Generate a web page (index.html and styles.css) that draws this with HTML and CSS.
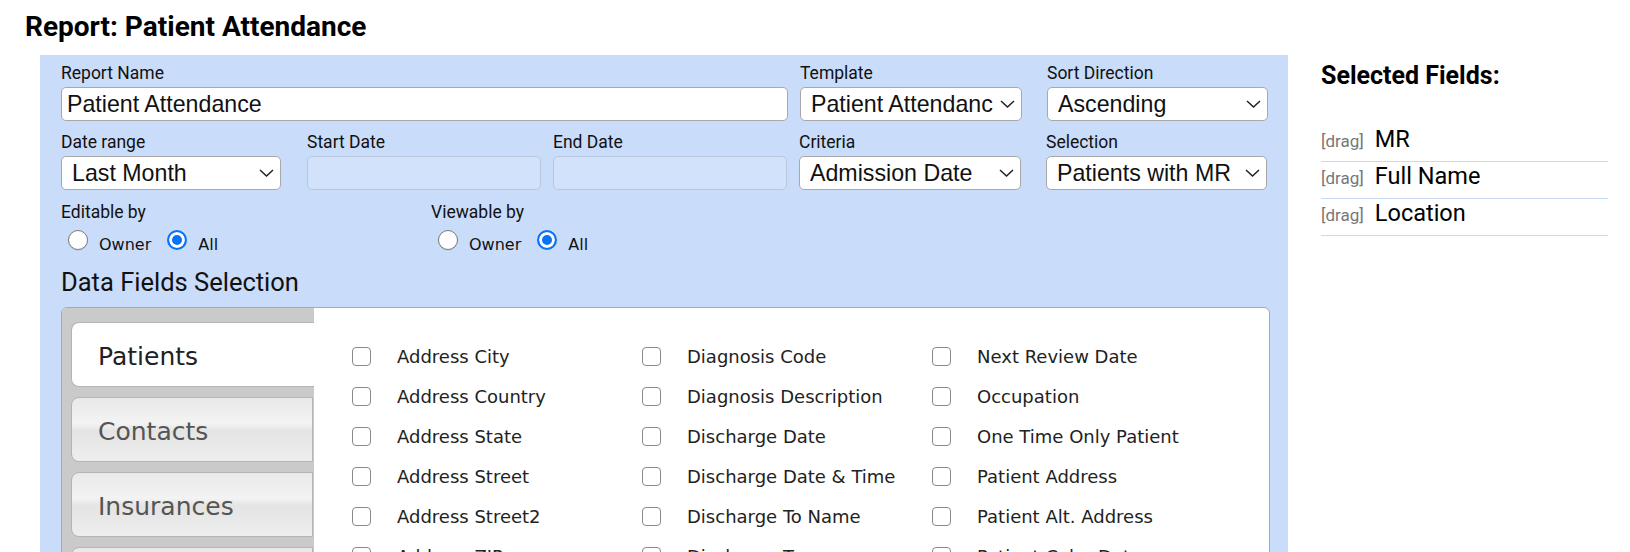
FILE: index.html
```html
<!DOCTYPE html>
<html lang="en">
<head>
<meta charset="utf-8">
<title>Report: Patient Attendance</title>
<link rel="stylesheet" href="styles.css">
</head>
<body>
<h1 class="page-title">Report: Patient Attendance</h1>
<div class="layout">
  <section class="panel">
    <div class="form-row row-1">
      <div class="field f-name">
        <label class="lbl">Report Name</label>
        <input class="txt" type="text" value="Patient Attendance">
      </div>
      <div class="field f-template">
        <label class="lbl">Template</label>
        <div class="sel">
          <select><option>Patient Attendance</option></select>
          <svg class="chev" viewBox="0 0 15 8"><path d="M1 1 L7.5 7 L14 1" fill="none" stroke="#222" stroke-width="1.5"/></svg>
        </div>
      </div>
      <div class="field f-sort">
        <label class="lbl">Sort Direction</label>
        <div class="sel">
          <select><option>Ascending</option></select>
          <svg class="chev" viewBox="0 0 15 8"><path d="M1 1 L7.5 7 L14 1" fill="none" stroke="#222" stroke-width="1.5"/></svg>
        </div>
      </div>
    </div>

    <div class="form-row row-2">
      <div class="field f-range">
        <label class="lbl">Date range</label>
        <div class="sel">
          <select><option>Last Month</option></select>
          <svg class="chev" viewBox="0 0 15 8"><path d="M1 1 L7.5 7 L14 1" fill="none" stroke="#222" stroke-width="1.5"/></svg>
        </div>
      </div>
      <div class="field f-start">
        <label class="lbl">Start Date</label>
        <input class="txt txt-disabled" type="text" disabled>
      </div>
      <div class="field f-end">
        <label class="lbl">End Date</label>
        <input class="txt txt-disabled" type="text" disabled>
      </div>
      <div class="field f-criteria">
        <label class="lbl">Criteria</label>
        <div class="sel">
          <select><option>Admission Date</option></select>
          <svg class="chev" viewBox="0 0 15 8"><path d="M1 1 L7.5 7 L14 1" fill="none" stroke="#222" stroke-width="1.5"/></svg>
        </div>
      </div>
      <div class="field f-selection">
        <label class="lbl">Selection</label>
        <div class="sel">
          <select><option>Patients with MR</option></select>
          <svg class="chev" viewBox="0 0 15 8"><path d="M1 1 L7.5 7 L14 1" fill="none" stroke="#222" stroke-width="1.5"/></svg>
        </div>
      </div>
    </div>

    <div class="form-row row-3">
      <div class="perm perm-edit">
        <label class="lbl lbl-perm">Editable by</label>
        <div class="radios">
          <input class="radio" type="radio" name="edit">
          <span class="radio-text">Owner</span>
          <input class="radio" type="radio" name="edit" checked>
          <span class="radio-text">All</span>
        </div>
      </div>
      <div class="perm">
        <label class="lbl lbl-perm">Viewable by</label>
        <div class="radios">
          <input class="radio" type="radio" name="view">
          <span class="radio-text">Owner</span>
          <input class="radio" type="radio" name="view" checked>
          <span class="radio-text">All</span>
        </div>
      </div>
    </div>

    <h2 class="section-title">Data Fields Selection</h2>

    <div class="tabs-box">
      <div class="tab-col">
        <div class="tab tab-active">Patients</div>
        <div class="tab">Contacts</div>
        <div class="tab">Insurances</div>
        <div class="tab">Services</div>
      </div>
      <div class="fields">
        <label class="chk-item"><input class="chk" type="checkbox"><span class="chk-label">Address City</span></label>
        <label class="chk-item"><input class="chk" type="checkbox"><span class="chk-label">Diagnosis Code</span></label>
        <label class="chk-item"><input class="chk" type="checkbox"><span class="chk-label">Next Review Date</span></label>

        <label class="chk-item"><input class="chk" type="checkbox"><span class="chk-label">Address Country</span></label>
        <label class="chk-item"><input class="chk" type="checkbox"><span class="chk-label">Diagnosis Description</span></label>
        <label class="chk-item"><input class="chk" type="checkbox"><span class="chk-label">Occupation</span></label>

        <label class="chk-item"><input class="chk" type="checkbox"><span class="chk-label">Address State</span></label>
        <label class="chk-item"><input class="chk" type="checkbox"><span class="chk-label">Discharge Date</span></label>
        <label class="chk-item"><input class="chk" type="checkbox"><span class="chk-label">One Time Only Patient</span></label>

        <label class="chk-item"><input class="chk" type="checkbox"><span class="chk-label">Address Street</span></label>
        <label class="chk-item"><input class="chk" type="checkbox"><span class="chk-label">Discharge Date &amp; Time</span></label>
        <label class="chk-item"><input class="chk" type="checkbox"><span class="chk-label">Patient Address</span></label>

        <label class="chk-item"><input class="chk" type="checkbox"><span class="chk-label">Address Street2</span></label>
        <label class="chk-item"><input class="chk" type="checkbox"><span class="chk-label">Discharge To Name</span></label>
        <label class="chk-item"><input class="chk" type="checkbox"><span class="chk-label">Patient Alt. Address</span></label>

        <label class="chk-item"><input class="chk" type="checkbox"><span class="chk-label">Address ZIP</span></label>
        <label class="chk-item"><input class="chk" type="checkbox"><span class="chk-label">Discharge Type</span></label>
        <label class="chk-item"><input class="chk" type="checkbox"><span class="chk-label">Patient Color Date</span></label>
      </div>
    </div>
  </section>

  <aside class="selected">
    <h3 class="sf-title">Selected Fields:</h3>
    <ul class="sf-list">
      <li class="sf-item"><span class="drag">[drag]</span>MR</li>
      <li class="sf-item"><span class="drag">[drag]</span>Full Name</li>
      <li class="sf-item"><span class="drag">[drag]</span>Location</li>
    </ul>
  </aside>
</div>
</body>
</html>
```

FILE: styles.css
```css
html {
  overflow: hidden;
}

body {
  margin: 0;
  background: #ffffff;
  color: #111111;
  font-family: Roboto, "Liberation Sans", Arial, sans-serif;
}

.page-title {
  margin: 0 0 12px 0;
  padding: 11px 0 0 25px;
  font: 700 28px/32px Roboto, "Liberation Sans", sans-serif;
  color: #000;
}

.layout {
  display: flex;
  align-items: flex-start;
  padding-left: 40px;
}

/* ---------- left panel ---------- */
.panel {
  box-sizing: border-box;
  width: 1248px;
  height: 497px;
  overflow: hidden;
  background: #c9dcf9;
  padding: 8px 6px 0 21px;
}

.form-row {
  display: flex;
}

.row-2 {
  margin-top: 11px;
}

.row-3 {
  margin-top: 12px;
}

.field {
  display: flex;
  flex-direction: column;
}

.lbl {
  display: block;
  font: 17.5px/20px Roboto, "Liberation Sans", sans-serif;
  color: #111;
  margin-bottom: 4px;
}

.f-name { width: 727px; }
.f-template { width: 222px; margin-left: 12px; }
.f-sort { width: 221px; margin-left: 25px; }

.f-range { width: 220px; }
.f-start { width: 234px; margin-left: 26px; }
.f-end { width: 234px; margin-left: 12px; }
.f-criteria { width: 222px; margin-left: 12px; }
.f-selection { width: 221px; margin-left: 25px; }

.txt,
.sel select {
  box-sizing: border-box;
  width: 100%;
  height: 34px;
  margin: 0;
  border: 1px solid #a8a8a8;
  border-radius: 5px;
  background: #ffffff;
  color: #111;
  font: 23.2px "Liberation Sans", Arial, sans-serif;
  outline: none;
}

.txt {
  padding: 0 5px;
}

.txt-disabled {
  background: #d2e2fa;
  border-color: #b7c7dd;
}

.sel {
  position: relative;
}

.sel select {
  -webkit-appearance: none;
  appearance: none;
  padding: 0 28px 0 10px;
}

.chev {
  position: absolute;
  right: 7px;
  top: 13px;
  width: 15px;
  height: 8px;
  pointer-events: none;
}

/* permissions */
.perm {
  width: 370px;
}

.lbl-perm {
  margin-bottom: 8px;
}

.radios {
  display: flex;
  align-items: flex-start;
  height: 25px;
  padding-left: 7px;
}

.radio {
  -webkit-appearance: none;
  appearance: none;
  box-sizing: border-box;
  width: 20px;
  height: 20px;
  margin: 0;
  border-radius: 50%;
  border: 1.5px solid #7d7d7d;
  background: #ffffff;
  box-shadow: 0 0.5px 1px rgba(0, 0, 0, 0.15);
}

.radio:checked {
  border: 2px solid #0a72f5;
  background: #0a72f5;
  box-shadow: inset 0 0 0 3px #ffffff;
}

.radio-text {
  font: 16px/20px "DejaVu Sans", Verdana, sans-serif;
  color: #111;
  padding-top: 4.5px;
  margin-left: 11px;
  margin-right: 16px;
}

.section-title {
  margin: 13px 0 0 0;
  font: 400 25.5px/28px Roboto, "Liberation Sans", sans-serif;
  color: #111;
}

/* ---------- tabs box ---------- */
.tabs-box {
  display: flex;
  width: 1209px;
  height: 400px;
  margin-top: 11px;
  border: 1px solid #a9a9a9;
  border-radius: 6px;
  background: #ffffff;
  overflow: hidden;
  box-sizing: border-box;
}

.tab-col {
  box-sizing: border-box;
  width: 252px;
  flex: none;
  background: #cacaca;
  padding: 14px 0 0 9px;
  display: flex;
  flex-direction: column;
  gap: 10px;
}

.tab {
  box-sizing: border-box;
  height: 65px;
  flex: none;
  display: flex;
  align-items: center;
  padding: 4px 0 0 26px;
  margin-right: 1px;
  border: 1px solid #b4b4b4;
  border-radius: 8px 0 0 8px;
  background: linear-gradient(#e9e9e9 0%, #f3f3f3 40%, #e4e4e4 52%, #eeeeee 100%);
  color: #555555;
  font: 25px "DejaVu Sans", Verdana, sans-serif;
}

.tab-active {
  margin-right: 0;
  border-right: none;
  background: #ffffff;
  color: #222222;
}

.fields {
  flex: 1;
  display: grid;
  grid-template-columns: repeat(3, 290px);
  grid-auto-rows: 40px;
  align-content: start;
  padding: 39px 0 0 38px;
}

.chk-item {
  display: flex;
  align-items: flex-start;
}

.chk {
  -webkit-appearance: none;
  appearance: none;
  box-sizing: border-box;
  width: 19px;
  height: 19px;
  margin: 0;
  border: 1.5px solid #8a8a8a;
  border-radius: 4px;
  background: #ffffff;
  flex: none;
}

.chk-label {
  margin-left: 26px;
  font: 18px/20px "DejaVu Sans", Verdana, sans-serif;
  color: #222;
  white-space: nowrap;
}

/* ---------- selected fields ---------- */
.selected {
  width: 287px;
  margin-left: 33px;
}

.sf-title {
  margin: 8px 0 0 0;
  font: 700 25px/25px Roboto, "Liberation Sans", sans-serif;
  color: #000;
}

.sf-list {
  list-style: none;
  margin: 37px 0 0 0;
  padding: 0;
}

.sf-item {
  height: 35px;
  box-sizing: content-box;
  padding: 1px 0 0 0;
  font: 23.5px/26px Roboto, "Liberation Sans", sans-serif;
  color: #000;
  border-bottom: 1px solid #c6daf6;
}

.drag {
  color: #777777;
  font-size: 17px;
  line-height: 17px;
  margin-right: 11px;
}
```
